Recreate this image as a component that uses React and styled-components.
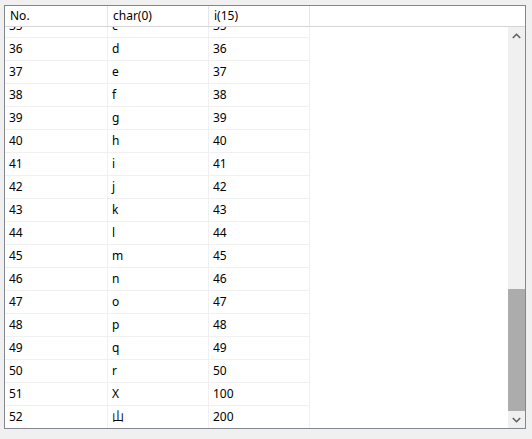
import React from 'react';
import styled, { createGlobalStyle } from 'styled-components';

const Global = createGlobalStyle`
  html, body { margin: 0; padding: 0; background: #f0f0f0; }
  body { font-family: "Noto Sans", "Noto Sans CJK JP", sans-serif; font-size: 12px; color: #000; }
`;

const Page = styled.div`
  width: 532px;
  height: 439px;
  padding: 5px 6px 0 4px;
  box-sizing: border-box;
`;

const Frame = styled.div`
  width: 522px;
  height: 424px;
  border: 1px solid #828790;
  background: #fff;
  box-sizing: border-box;
  display: flex;
  flex-direction: column;
  overflow: hidden;
`;

const Header = styled.div`
  height: 21px;
  box-sizing: border-box;
  border-bottom: 1px solid #d5d5d5;
  display: flex;
  flex: none;
`;

const HeadCell = styled.div`
  width: ${p => (p.$w ? `${p.$w}px` : 'auto')};
  flex: ${p => (p.$w ? 'none' : '1')};
  box-sizing: border-box;
  border-right: ${p => (p.$w ? '1px solid #e5e5e5' : 'none')};
  padding-left: 5px;
  display: flex;
  align-items: center;
  white-space: nowrap;
  line-height: 1;
`;

const Body = styled.div`
  flex: 1;
  display: flex;
  min-height: 0;
`;

const Viewport = styled.div`
  flex: 1;
  overflow: hidden;
  position: relative;
`;

const Grid = styled.div`
  width: 305px;
  margin-top: -12px;
  display: flex;
  flex-direction: column;
  border-right: 1px solid #f0f0f0;
  box-sizing: border-box;
  min-height: calc(100% + 12px);
`;

const Row = styled.div`
  display: flex;
  height: 23px;
  flex: none;
  box-sizing: border-box;
  border-bottom: 1px solid #f0f0f0;
`;

const Cell = styled.div`
  width: ${p => p.$w}px;
  box-sizing: border-box;
  border-right: ${p => (p.$last ? 'none' : '1px solid #f0f0f0')};
  padding-left: 4px;
  display: flex;
  align-items: center;
  white-space: nowrap;
  line-height: 1;
`;

const Scrollbar = styled.div`
  width: 17px;
  flex: none;
  background: #f0f0f0;
  display: flex;
  flex-direction: column;
`;

const Arrow = styled.div`
  height: 17px;
  flex: none;
  display: flex;
  align-items: center;
  justify-content: center;
`;

const Track = styled.div`
  flex: 1;
  display: flex;
  flex-direction: column;
  justify-content: flex-end;
`;

const Thumb = styled.div`
  height: 122px;
  background: #acacac;
`;

const Chevron = ({ up }) => (
  <svg width="9" height="6" viewBox="0 0 9 6">
    <polyline
      points={up ? '0.8,5 4.5,1.3 8.2,5' : '0.8,1 4.5,4.7 8.2,1'}
      fill="none"
      stroke="#606060"
      strokeWidth="1.6"
    />
  </svg>
);

const cols = [103, 101, 101];

const data = [];
for (let i = 35; i <= 50; i++) {
  data.push([String(i), String.fromCharCode(99 + (i - 35)), String(i)]);
}
data.push(['51', 'X', '100']);
data.push(['52', '山', '200']);

export default function App() {
  return (
    <>
      <Global />
      <Page>
        <Frame>
          <Header>
            <HeadCell $w={cols[0]}>No.</HeadCell>
            <HeadCell $w={cols[1]}>char(0)</HeadCell>
            <HeadCell $w={cols[2]}>i(15)</HeadCell>
            <HeadCell />
          </Header>
          <Body>
            <Viewport>
              <Grid>
                {data.map(r => (
                  <Row key={r[0]}>
                    <Cell $w={cols[0]}>{r[0]}</Cell>
                    <Cell $w={cols[1]}>{r[1]}</Cell>
                    <Cell $w={cols[2] - 1} $last>{r[2]}</Cell>
                  </Row>
                ))}
              </Grid>
            </Viewport>
            <Scrollbar>
              <Arrow><Chevron up /></Arrow>
              <Track><Thumb /></Track>
              <Arrow><Chevron /></Arrow>
            </Scrollbar>
          </Body>
        </Frame>
      </Page>
    </>
  );
}
